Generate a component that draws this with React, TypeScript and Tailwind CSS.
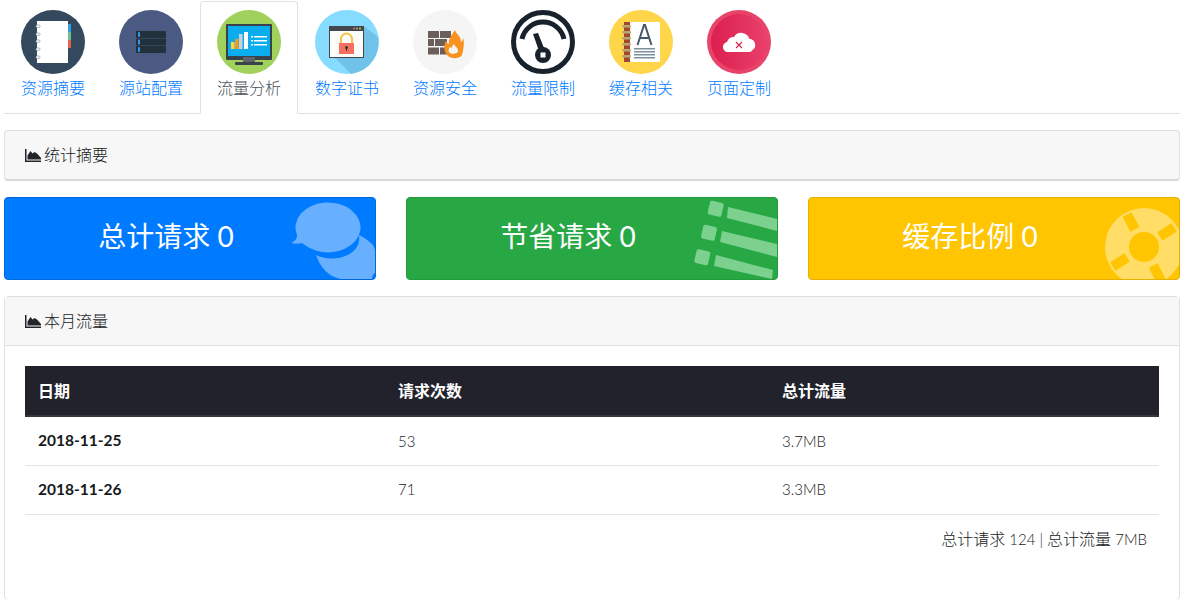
import { ReactNode } from 'react';

const IconNotebook = () => (
  <svg width="64" height="64" viewBox="0 0 64 64">
    <circle cx="32" cy="32" r="32" fill="#34495e" />
    <rect x="47" y="14" width="3" height="8" fill="#2f9fe0" />
    <rect x="47" y="22" width="3" height="8" fill="#6fbf8f" />
    <rect x="47" y="30" width="3" height="8" fill="#e8604c" />
    <rect x="16" y="11" width="31" height="42" fill="#fff" />
    {[15, 23, 30, 38, 46].map((y) => (
      <rect key={y} x="15" y={y} width="4" height="2.4" rx="1" fill="#fff" stroke="#78858f" strokeWidth="0.6" />
    ))}
  </svg>
);

const IconServer = () => (
  <svg width="64" height="64" viewBox="0 0 64 64">
    <circle cx="32" cy="32" r="32" fill="#4b5a82" />
    {[21, 28.5, 36].map((y) => (
      <g key={y}>
        <rect x="17" y={y} width="30" height="7" rx="1" fill="#22313c" />
        <rect x="19" y={y + 1.2} width="2" height="4.6" fill="#2c9cef" />
      </g>
    ))}
  </svg>
);

const IconMonitor = () => (
  <svg width="64" height="64" viewBox="0 0 64 64">
    <circle cx="32" cy="32" r="32" fill="#a0d15c" />
    <rect x="9" y="14" width="46" height="36" rx="1" fill="#37424a" />
    <rect x="11" y="16" width="42" height="30" fill="#0aaeee" />
    <rect x="26" y="47" width="12" height="7" fill="#5e6367" />
    <rect x="18" y="52" width="28" height="3" rx="1" fill="#37424a" />
    <rect x="14" y="32" width="3.5" height="7" fill="#ffd93b" />
    <rect x="18" y="29" width="3.5" height="10" fill="#f39a1f" />
    <rect x="22" y="24" width="3.5" height="15" fill="#c9d2d6" />
    <rect x="27" y="22" width="4" height="17" fill="#fff" />
    {[26, 30, 34].map((y) => (
      <g key={y}>
        <rect x="34" y={y} width="2" height="1.5" fill="#fff" />
        <rect x="37" y={y} width="13" height="1.5" fill="#fff" />
      </g>
    ))}
  </svg>
);

const IconLock = () => (
  <svg width="64" height="64" viewBox="0 0 64 64">
    <circle cx="32" cy="32" r="32" fill="#85dcff" />
    <path d="M49 16 L63 27 A32 32 0 0 1 36 64 L20 48 Z" fill="#70c2e8" />
    <rect x="14" y="16" width="35" height="32" fill="#44474d" />
    <rect x="15" y="21" width="33" height="26" fill="#fbfbf8" />
    <circle cx="39" cy="18.5" r="1" fill="#e57055" />
    <circle cx="42" cy="18.5" r="1" fill="#7cc48f" />
    <circle cx="45" cy="18.5" r="1" fill="#eeb83c" />
    <path d="M26 33 V29 a5.5 5.5 0 0 1 11 0 V33" fill="none" stroke="#f2c14e" strokeWidth="2" />
    <rect x="24" y="33" width="15" height="11" fill="#f6705f" />
    <circle cx="31.5" cy="37.5" r="1.5" fill="#333" />
    <rect x="31" y="38" width="1" height="3" fill="#333" />
  </svg>
);

const IconFirewall = () => (
  <svg width="64" height="64" viewBox="0 0 64 64">
    <circle cx="32" cy="32" r="32" fill="#f5f5f5" />
    <g fill="#6b5f5b">
      <rect x="15" y="21" width="11" height="7" />
      <rect x="27" y="21" width="11" height="7" />
      <rect x="15" y="29" width="6" height="7" />
      <rect x="22" y="29" width="12" height="7" />
      <rect x="15" y="37.5" width="11" height="7" />
      <rect x="27" y="37.5" width="8" height="7" />
    </g>
    <path d="M41 20 C42 24 47 26 47 32 C48 31 49 30 49 28 C51 32 49 42 48 45 C46 49 37 49 34 46 C30 42 29 36 32 31 C33 33 34 34 35 34 C34 29 38 25 41 20 Z" fill="#f7931e" transform="translate(1 0)" />
    <path d="M41 34 C42 37 45 37 45 41 C45 44 38 45 36 42 C35 40 36 38 37 37 C38 38 39 38 39 37 C39 36 40 35 41 34 Z" fill="#f5f5f5" />
  </svg>
);

const IconGauge = () => (
  <svg width="64" height="64" viewBox="0 0 64 64">
    <circle cx="32" cy="32" r="29.5" fill="#fff" stroke="#18222c" strokeWidth="5" />
    <path d="M11 29 A21.5 21.5 0 0 1 53 29" fill="none" stroke="#18222c" strokeWidth="5" />
    <path d="M22 24 L27 23 L33 38 L28 41 Z" fill="#18222c" />
    <circle cx="32" cy="45" r="8" fill="#18222c" />
    <rect x="29.5" y="42.5" width="5" height="5" fill="#fff" />
  </svg>
);

const IconBook = () => (
  <svg width="64" height="64" viewBox="0 0 64 64">
    <circle cx="32" cy="32" r="32" fill="#ffd54a" />
    <rect x="15" y="12" width="7" height="40" fill="#a5482a" />
    <rect x="21" y="12" width="30" height="40" rx="1" fill="#fff" />
    {[15, 21, 27, 33, 39, 45].map((y) => (
      <rect key={y} x="13" y={y} width="9" height="2.5" rx="1" fill="#b8a873" />
    ))}
    <path d="M28.5 35 L35 15 H36 L42.5 35 M31 28 H40" fill="none" stroke="#44596c" strokeWidth="2" />
    {[38, 41, 44, 47].map((y) => (
      <rect key={y} x="25" y={y} width="21" height="1.5" fill="#7d909e" />
    ))}
  </svg>
);

const IconCloud = () => (
  <svg width="64" height="64" viewBox="0 0 64 64">
    <defs>
      <linearGradient id="cloudBg" x1="0" y1="0" x2="1" y2="0">
        <stop offset="0" stopColor="#dc1f4e" />
        <stop offset="1" stopColor="#e9406b" />
      </linearGradient>
    </defs>
    <circle cx="32" cy="32" r="32" fill="#e8446a" />
    <circle cx="32" cy="32" r="28" fill="url(#cloudBg)" />
    <path d="M22 42 a5 5 0 0 1 -2 -10 a6.500 6.500 0 0 1 7 -5 a8.500 8.500 0 0 1 15.500 2 a6 6 0 0 1 3 11 q-1 2 -3 2 Z" fill="#fff" />
    <path d="M29 32 L35 38 M35 32 L29 38" stroke="#c92a4e" strokeWidth="1.2" />
  </svg>
);

const IconAreaChart = () => (
  <svg width="16" height="13" viewBox="0 0 16 13" className="shrink-0">
    <path d="M0 0 H1.5 V11.5 H16 V13 H0 Z M2.5 10.5 V6.5 L5.5 2 L7.5 4.5 L9.5 3 L12 4.5 L16 9 V10.5 Z" fill="#212529" />
  </svg>
);

const tabs: { label: string; icon: ReactNode; active?: boolean }[] = [
  { label: '资源摘要', icon: <IconNotebook /> },
  { label: '源站配置', icon: <IconServer /> },
  { label: '流量分析', icon: <IconMonitor />, active: true },
  { label: '数字证书', icon: <IconLock /> },
  { label: '资源安全', icon: <IconFirewall /> },
  { label: '流量限制', icon: <IconGauge /> },
  { label: '缓存相关', icon: <IconBook /> },
  { label: '页面定制', icon: <IconCloud /> },
];

const rows = [
  { date: '2018-11-25', count: '53', traffic: '3.7MB' },
  { date: '2018-11-26', count: '71', traffic: '3.3MB' },
];

const App = () => {
  return (
    <div className="h-[599px] overflow-hidden bg-white pr-[5px] pl-1 text-[16px] font-light text-[#16191c] font-['Lato','Noto_Sans_CJK_SC',sans-serif]">
      <ul className="flex h-[114px] border-b border-[#dee2e6] pt-px">
        {tabs.map((t) => (
          <li
            key={t.label}
            className={
              t.active
                ? 'relative -mb-px h-[113px] w-[98px] rounded-t border border-[#dee2e6] border-b-white bg-white pt-[8px] text-center text-[#495057]'
                : 'h-[112px] w-[98px] border border-transparent pt-[8px] text-center text-[#007bff]'
            }
          >
            <div className="flex justify-center">{t.icon}</div>
            <div className="mt-[3px] leading-[22px]">{t.label}</div>
          </li>
        ))}
      </ul>

      <div className="mt-4 flex h-[51px] items-center gap-[3px] rounded border border-[#dfdfdf] border-b-2 border-b-[#d8d8d8] bg-[#f7f7f7] px-5">
        <IconAreaChart />
        <span>统计摘要</span>
      </div>

      <div className="mt-4 flex justify-between">
        <div className="relative flex h-[83px] w-[372px] items-center justify-center overflow-hidden rounded border border-[#0069d9] bg-[#007bff] pr-[48px] pb-[5px] text-[28px] font-normal text-white">
          <svg width="90" height="81" viewBox="0 0 90 81" className="absolute top-0 right-0">
            <path d="M12 37 A32.5 25 0 1 1 32 53 C26 51 21 48 17 45 C14 46 10 46 6 45 C10 43 12 41 12 37 Z" fill="#66b0ff" />
            <path d="M31 57 C40 62 56 62 66 55 C73 50 75 44 74 37 C82 41 90 47 90 53 V75 C88 76 87 78 87 81 H55 C43 78 35 69 31 57 Z" fill="#66b0ff" />
          </svg>
          <span className="relative">总计请求 0</span>
        </div>
        <div className="relative flex h-[83px] w-[372px] items-center justify-center overflow-hidden rounded border border-[#239b3d] bg-[#28a745] pr-[48px] pb-[5px] text-[28px] font-normal text-white">
          <svg width="90" height="81" viewBox="0 0 90 81" className="absolute top-0 right-0">
            <g fill="#7dd18f">
              <rect x="21.7" y="3.7" width="14" height="14" rx="2" transform="rotate(13 28.7 10.7)" />
              <rect x="15" y="27.7" width="14" height="14" rx="2" transform="rotate(13 22 34.7)" />
              <rect x="8.3" y="52.3" width="14" height="14" rx="2" transform="rotate(13 15.3 59.3)" />
              <path d="M41 9 L90 21 V33 L40 20 Z" />
              <path d="M35 33 L90 46 V59 L33 44 Z" />
              <path d="M29 57 L86 72 L85 81 L27 68 Z" />
            </g>
          </svg>
          <span className="relative">节省请求 0</span>
        </div>
        <div className="relative flex h-[83px] w-[372px] items-center justify-center overflow-hidden rounded border border-[#e5b000] bg-[#ffc500] pr-[48px] pb-[5px] text-[28px] font-normal text-white">
          <svg width="80" height="81" viewBox="0 0 80 81" className="absolute top-0 right-0">
            <circle cx="45" cy="49" r="39" fill="#ffdd66" />
            <circle cx="45" cy="49" r="15" fill="#ffc500" />
            <g fill="#ffc500">
              <rect x="27" y="15.5" width="10" height="17" transform="rotate(-27 32 24)" />
              <rect x="63" y="25.5" width="10" height="17" transform="rotate(57 68 34)" />
              <rect x="16" y="55.5" width="10" height="17" transform="rotate(57 21 64)" />
              <rect x="53" y="66.5" width="10" height="17" transform="rotate(-27 58 75)" />
            </g>
          </svg>
          <span className="relative">缓存比例 0</span>
        </div>
      </div>

      <div className="mt-4 h-[304px] rounded border border-[#dfdfdf] bg-white">
        <div className="flex h-[49px] items-center gap-[3px] border-b border-[#dfdfdf] bg-[#f7f7f7] px-5">
          <IconAreaChart />
          <span>本月流量</span>
        </div>
        <div className="px-5 pt-5">
          <table className="w-full table-fixed border-collapse">
            <thead>
              <tr className="h-[50px] border-b-[2px] border-b-[#32383e] bg-[#21222b] text-left text-white">
                <th className="w-[360px] pl-[13px] font-bold">日期</th>
                <th className="w-[384px] pl-[13px] font-bold">请求次数</th>
                <th className="pl-[13px] font-bold">总计流量</th>
              </tr>
            </thead>
            <tbody>
              {rows.map((r) => (
                <tr key={r.date} className="h-[49px] border-b border-[#dee7e5]">
                  <td className="pl-[13px] text-[15.5px] font-bold">{r.date}</td>
                  <td className="pl-[13px] text-[15px]">{r.count}</td>
                  <td className="pl-[13px] text-[15px]">{r.traffic}</td>
                </tr>
              ))}
            </tbody>
          </table>
          <div className="mt-[13px] pr-3 text-right text-[15px] leading-[22px]">
            <span className="text-[16px]">总计请求</span> 124 | <span className="text-[16px]">总计流量</span> 7MB
          </div>
        </div>
      </div>
    </div>
  );
};

export default App;
